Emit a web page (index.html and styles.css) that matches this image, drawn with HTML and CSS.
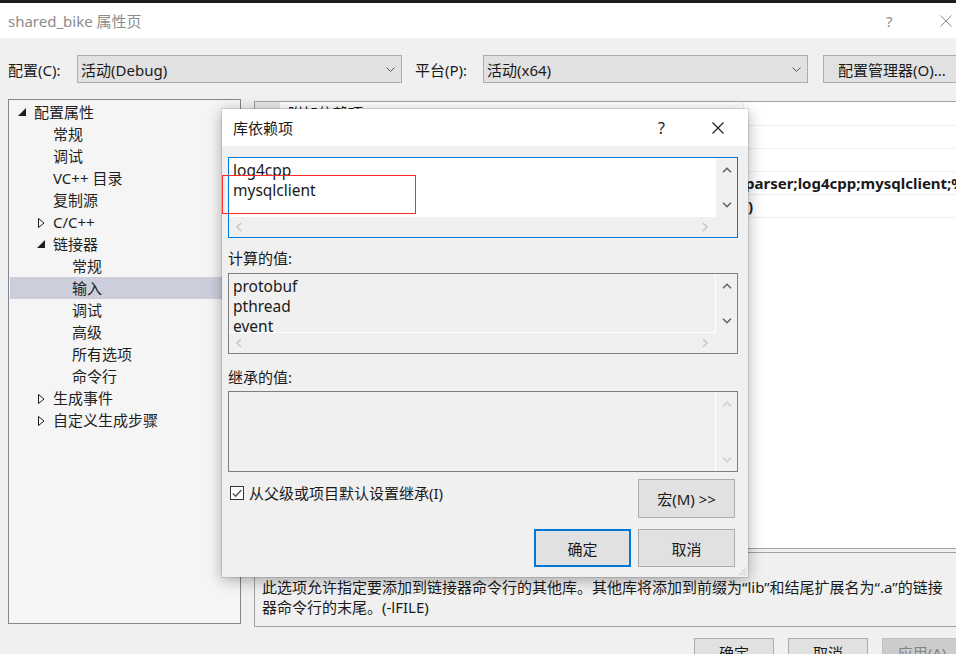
FILE: index.html
```html
<!DOCTYPE html>
<html lang="zh-CN">
<head>
<meta charset="utf-8">
<title>shared_bike 属性页</title>
<link rel="stylesheet" href="styles.css">
</head>
<body>
<div class="window">
  <div class="topstrip"></div>
  <div class="titlebar">
    <span class="wtitle">shared_bike 属性页</span>
    <span class="whelp">?</span>
    <svg class="wclose" width="12" height="12" viewBox="0 0 12 12"><path d="M0.5 0.5L11.5 11.5M11.5 0.5L0.5 11.5" stroke="#8a8a8a" stroke-width="1"/></svg>
  </div>

  <div class="main">
    <div class="config-row">
      <span class="lbl">配置(C):</span>
      <div class="combo"><span>活动(Debug)</span><svg width="9" height="5" viewBox="0 0 9 5"><path d="M0.5 0.5L4.5 4.5L8.5 0.5" fill="none" stroke="#555" stroke-width="1"/></svg></div>
      <span class="lbl lbl-plat">平台(P):</span>
      <div class="combo"><span>活动(x64)</span><svg width="9" height="5" viewBox="0 0 9 5"><path d="M0.5 0.5L4.5 4.5L8.5 0.5" fill="none" stroke="#555" stroke-width="1"/></svg></div>
      <button class="btn cfgmgr">配置管理器(O)...</button>
    </div>

    <div class="content">
      <div class="tree">
        <div class="node l0"><span class="tw"><svg width="8" height="8" viewBox="0 0 8 8"><path d="M8 0V8H0Z" fill="#1e1e1e"/></svg></span>配置属性</div>
        <div class="node l1"><span class="tw"></span>常规</div>
        <div class="node l1"><span class="tw"></span>调试</div>
        <div class="node l1"><span class="tw"></span>VC++ 目录</div>
        <div class="node l1"><span class="tw"></span>复制源</div>
        <div class="node l1"><span class="tw"><svg class="closed" width="7" height="10" viewBox="0 0 7 10"><path d="M0.5 0.5L6 5L0.5 9.5Z" fill="none" stroke="#1e1e1e" stroke-width="1"/></svg></span>C/C++</div>
        <div class="node l1"><span class="tw"><svg width="8" height="8" viewBox="0 0 8 8"><path d="M8 0V8H0Z" fill="#1e1e1e"/></svg></span>链接器</div>
        <div class="node l2"><span class="tw"></span>常规</div>
        <div class="node l2 sel"><span class="tw"></span>输入</div>
        <div class="node l2"><span class="tw"></span>调试</div>
        <div class="node l2"><span class="tw"></span>高级</div>
        <div class="node l2"><span class="tw"></span>所有选项</div>
        <div class="node l2"><span class="tw"></span>命令行</div>
        <div class="node l1"><span class="tw"><svg class="closed" width="7" height="10" viewBox="0 0 7 10"><path d="M0.5 0.5L6 5L0.5 9.5Z" fill="none" stroke="#1e1e1e" stroke-width="1"/></svg></span>生成事件</div>
        <div class="node l1"><span class="tw"><svg class="closed" width="7" height="10" viewBox="0 0 7 10"><path d="M0.5 0.5L6 5L0.5 9.5Z" fill="none" stroke="#1e1e1e" stroke-width="1"/></svg></span>自定义生成步骤</div>
      </div>

      <div class="rightcol">
        <div class="grid">
          <div class="prow first"><span class="gutter"></span><span class="pname">附加依赖项</span><span class="pval"></span></div>
          <div class="prow"><span class="gutter"></span><span class="pname">忽略所有默认库</span><span class="pval"></span></div>
          <div class="prow"><span class="gutter"></span><span class="pname">忽略特定默认库</span><span class="pval"></span></div>
          <div class="prow"><span class="gutter"></span><span class="pname">模块定义文件</span><span class="pval">parser;log4cpp;mysqlclient;%(AdditionalDependencies)</span></div>
          <div class="prow"><span class="gutter"></span><span class="pname">将模块添加到程序集</span><span class="pval cont">)</span></div>
        </div>
        <div class="desc">
          <div class="desc-title">附加依赖项</div>
          <div class="desc-line">此选项允许指定要添加到链接器命令行的其他库。其他库将添加到前缀为“lib”和结尾扩展名为“.a”的链接</div>
          <div class="desc-line">器命令行的末尾。(-lFILE)</div>
        </div>
      </div>
    </div>

    <div class="footer">
      <button class="btn fbtn">确定</button>
      <button class="btn fbtn">取消</button>
      <button class="btn fbtn disabled">应用(A)</button>
    </div>
  </div>

  <div class="dialog">
    <div class="dtitle">
      <span class="dt">库依赖项</span>
      <span class="dhelp">?</span>
      <svg class="dclose" width="12" height="12" viewBox="0 0 12 12"><path d="M0.5 0.5L11.5 11.5M11.5 0.5L0.5 11.5" stroke="#1a1a1a" stroke-width="1.1"/></svg>
    </div>
    <div class="dbody">
      <div class="lb focus">
        <div class="lb-text edit">
          <div>log4cpp</div>
          <div>mysqlclient</div>
        </div>
        <div class="vscroll">
          <svg width="10" height="6" viewBox="0 0 10 6"><path d="M1 5.3L5 1.3L9 5.3" fill="none" stroke="#606060" stroke-width="1.5"/></svg>
          <svg class="down" width="10" height="6" viewBox="0 0 10 6"><path d="M1 0.7L5 4.7L9 0.7" fill="none" stroke="#606060" stroke-width="1.5"/></svg>
        </div>
        <div class="hscroll">
          <svg width="6" height="10" viewBox="0 0 6 10"><path d="M5 1L1 5L5 9" fill="none" stroke="#c6c6c6" stroke-width="1.5"/></svg>
          <svg width="6" height="10" viewBox="0 0 6 10"><path d="M1 1L5 5L1 9" fill="none" stroke="#c6c6c6" stroke-width="1.5"/></svg>
        </div>
        <div class="corner"></div>
      </div>

      <div class="dlabel first">计算的值:</div>
      <div class="lb">
        <div class="lb-text ro">
          <div>protobuf</div>
          <div>pthread</div>
          <div>event</div>
        </div>
        <div class="vscroll">
          <svg width="10" height="6" viewBox="0 0 10 6"><path d="M1 5.3L5 1.3L9 5.3" fill="none" stroke="#606060" stroke-width="1.5"/></svg>
          <svg class="down" width="10" height="6" viewBox="0 0 10 6"><path d="M1 0.7L5 4.7L9 0.7" fill="none" stroke="#606060" stroke-width="1.5"/></svg>
        </div>
        <div class="hscroll">
          <svg width="6" height="10" viewBox="0 0 6 10"><path d="M5 1L1 5L5 9" fill="none" stroke="#c6c6c6" stroke-width="1.5"/></svg>
          <svg width="6" height="10" viewBox="0 0 6 10"><path d="M1 1L5 5L1 9" fill="none" stroke="#c6c6c6" stroke-width="1.5"/></svg>
        </div>
        <div class="corner"></div>
      </div>

      <div class="dlabel second">继承的值:</div>
      <div class="lb single">
        <div class="lb-text ro"></div>
        <div class="vscroll full">
          <svg width="10" height="6" viewBox="0 0 10 6"><path d="M1 5.3L5 1.3L9 5.3" fill="none" stroke="#cfcfcf" stroke-width="1.5"/></svg>
          <svg width="10" height="6" viewBox="0 0 10 6"><path d="M1 0.7L5 4.7L9 0.7" fill="none" stroke="#cfcfcf" stroke-width="1.5"/></svg>
        </div>
      </div>

      <div class="optrow">
        <label class="check"><span class="cb"><svg width="12" height="12" viewBox="0 0 12 12"><path d="M1.8 6.4L4.6 9.2L10.4 3" fill="none" stroke="#505050" stroke-width="1.3"/></svg></span>从父级或项目默认设置继承(I)</label>
        <button class="btn dbtn macro">宏(M) &gt;&gt;</button>
      </div>

      <div class="okrow">
        <button class="btn dbtn ok">确定</button>
        <button class="btn dbtn">取消</button>
      </div>
    </div>
    <svg class="grip" width="10" height="10" viewBox="0 0 10 10"><path d="M9.5 1.5L1.5 9.5M9.5 4.5L4.5 9.5M9.5 7.5L7.5 9.5" stroke="#a8a8a8" stroke-width="1" stroke-dasharray="1 1"/></svg>
    <div class="redmark"></div>
  </div>
</div>
</body>
</html>
```

FILE: styles.css
```css
* { box-sizing: border-box; }
html, body { margin: 0; padding: 0; }
body {
  width: 956px;
  height: 654px;
  overflow: hidden;
  background: #f0f0f0;
  font-family: "Noto Sans", "Noto Sans CJK SC", sans-serif;
  font-size: 15px;
  color: #1a1a1a;
}
.window { position: relative; width: 966px; height: 654px; }

.topstrip { height: 3px; background: #1e1e1e; }
.titlebar {
  height: 35px;
  background: #fff;
  display: flex;
  align-items: center;
  padding-left: 8px;
}
.wtitle { flex: 1; color: #8c8c8c; font-size: 15px; }
.whelp { width: 8px; margin-right: 46px; color: #8c8c8c; font-size: 15px; }
.wclose { margin-right: 14px; }

.main { padding: 17px 0 0 8px; }

.config-row { display: flex; align-items: center; height: 28px; }
.lbl { width: 69px; flex: none; white-space: nowrap; }
.lbl-plat { width: 68px; margin-left: 13px; }
.combo {
  width: 325px;
  flex: none;
  height: 28px;
  background: #e1e1e1;
  border: 1px solid #adadad;
  display: flex;
  align-items: center;
  justify-content: space-between;
  padding: 0 6px 0 3px;
}
.btn {
  font: inherit;
  color: #1a1a1a;
  background: #e1e1e1;
  border: 1px solid #adadad;
  padding: 0;
  margin: 0;
  white-space: nowrap;
}
.cfgmgr {
  flex: none;
  margin-left: 15px;
  width: 140px;
  height: 28px;
  text-align: left;
  padding-left: 14px;
}

.content { display: flex; align-items: flex-start; margin-top: 16px; }
.tree {
  flex: none;
  width: 233px;
  height: 525px;
  border: 1px solid #828790;
  background: #f5f5f5;
  padding: 1px 0 0 1px;
}
.node {
  height: 22px;
  line-height: 22px;
  display: flex;
  align-items: center;
  white-space: nowrap;
  color: #1e1e1e;
}
.node.l1 { padding-left: 19px; }
.node.l2 { padding-left: 38px; }
.node.sel { background: #cccedb; }
.tw { width: 24px; height: 22px; flex: none; display: flex; align-items: center; padding-left: 8px; }
.tw .closed { margin-left: 1px; margin-top: 1px; }

.rightcol {
  flex: 1;
  min-width: 0;
  margin-left: 13px;
  margin-top: 2px;
  display: flex;
  flex-direction: column;
  gap: 3px;
}
.grid {
  height: 448px;
  border: 1px solid #a0a0a0;
  background: #fff;
  overflow: hidden;
}
.prow {
  display: flex;
  height: 23px;
  line-height: 22px;
  border-bottom: 1px solid #efefef;
  white-space: nowrap;
}
.prow.first { height: 24px; }
.gutter { width: 25px; background: #e6e6e6; flex: none; }
.pname { width: 464px; flex: none; padding-left: 8px; border-right: 1px solid #efefef; overflow: hidden; }
.pval { flex: 1; min-width: 0; padding-left: 1px; font-weight: 700; overflow: hidden; }
.pval.cont { padding-left: 4px; }

.desc {
  height: 75px;
  border: 1px solid #a0a0a0;
  background: #f0f0f0;
  padding: 4px 8px 0 7px;
  line-height: 20px;
  overflow: hidden;
}
.desc-title { font-weight: 700; }
.desc-line { white-space: nowrap; }

.footer {
  display: flex;
  justify-content: flex-end;
  gap: 14px;
  margin-top: 11px;
  padding-right: 4px;
}
.fbtn { width: 80px; height: 28px; }
.fbtn.disabled { background: #cccccc; border-color: #bfbfbf; color: #838383; }

/* Dialog */
.dialog {
  position: absolute;
  left: 222px;
  top: 109px;
  width: 526px;
  height: 468px;
  background: #f0f0f0;
  box-shadow: 0 0 0 1px rgba(0,0,0,0.10), 0 3px 14px rgba(0,0,0,0.33);
}
.dtitle {
  height: 37px;
  background: #fff;
  display: flex;
  align-items: center;
  padding-left: 11px;
}
.dt { flex: 1; }
.dhelp { width: 8px; margin-right: 46px; font-size: 16px; }
.dclose { margin-right: 24px; }

.dbody { padding: 11px 10px 0 6px; }

.lb {
  height: 81px;
  border: 1px solid #7f7f7f;
  background: #f0f0f0;
  display: grid;
  grid-template-columns: 487px 21px;
  grid-template-rows: 59px 20px;
}
.lb.focus { border-color: #0078d7; }
.lb.single { grid-template-rows: 79px; }
.lb-text {
  padding: 2px 0 0 4px;
  line-height: 20px;
  overflow: hidden;
  white-space: nowrap;
  font-size: 15.5px;
}
.lb-text.edit { background: #fff; }
.lb-text.ro { border-right: 1px solid #fff; border-bottom: 1px solid #fff; }
.lb.single .lb-text.ro { border-bottom: none; }
.vscroll {
  display: flex;
  flex-direction: column;
  align-items: center;
  padding-top: 9px;
}
.vscroll .down { margin-top: 29px; }
.vscroll.full { justify-content: space-between; padding: 9px 0 8px; }
.hscroll {
  display: flex;
  align-items: center;
  justify-content: space-between;
  padding: 0 8px 0 7px;
}

.dlabel { line-height: 20px; }
.dlabel.first { margin-top: 10px; margin-bottom: 5px; }
.dlabel.second { margin-top: 13px; margin-bottom: 4px; }

.optrow {
  display: flex;
  justify-content: space-between;
  align-items: flex-start;
  margin-top: 7px;
  padding-right: 3px;
}
.check {
  display: flex;
  align-items: center;
  margin-top: 6px;
  margin-left: 2px;
  line-height: 16px;
}
.cb {
  width: 14px;
  height: 14px;
  border: 1px solid #333;
  background: #fff;
  display: flex;
  align-items: center;
  justify-content: center;
  margin-right: 5px;
}
.dbtn { width: 97px; height: 38px; }
.macro { height: 39px; }
.okrow {
  display: flex;
  justify-content: flex-end;
  gap: 7px;
  margin-top: 11px;
  padding-right: 3px;
}
.dbtn.ok { border: 2px solid #0078d7; }

.grip { position: absolute; right: 1px; bottom: 1px; }
.redmark {
  position: absolute;
  left: 0;
  top: 66px;
  width: 194px;
  height: 39px;
  border: 1px solid #ff2a2a;
  z-index: 2;
}
```
